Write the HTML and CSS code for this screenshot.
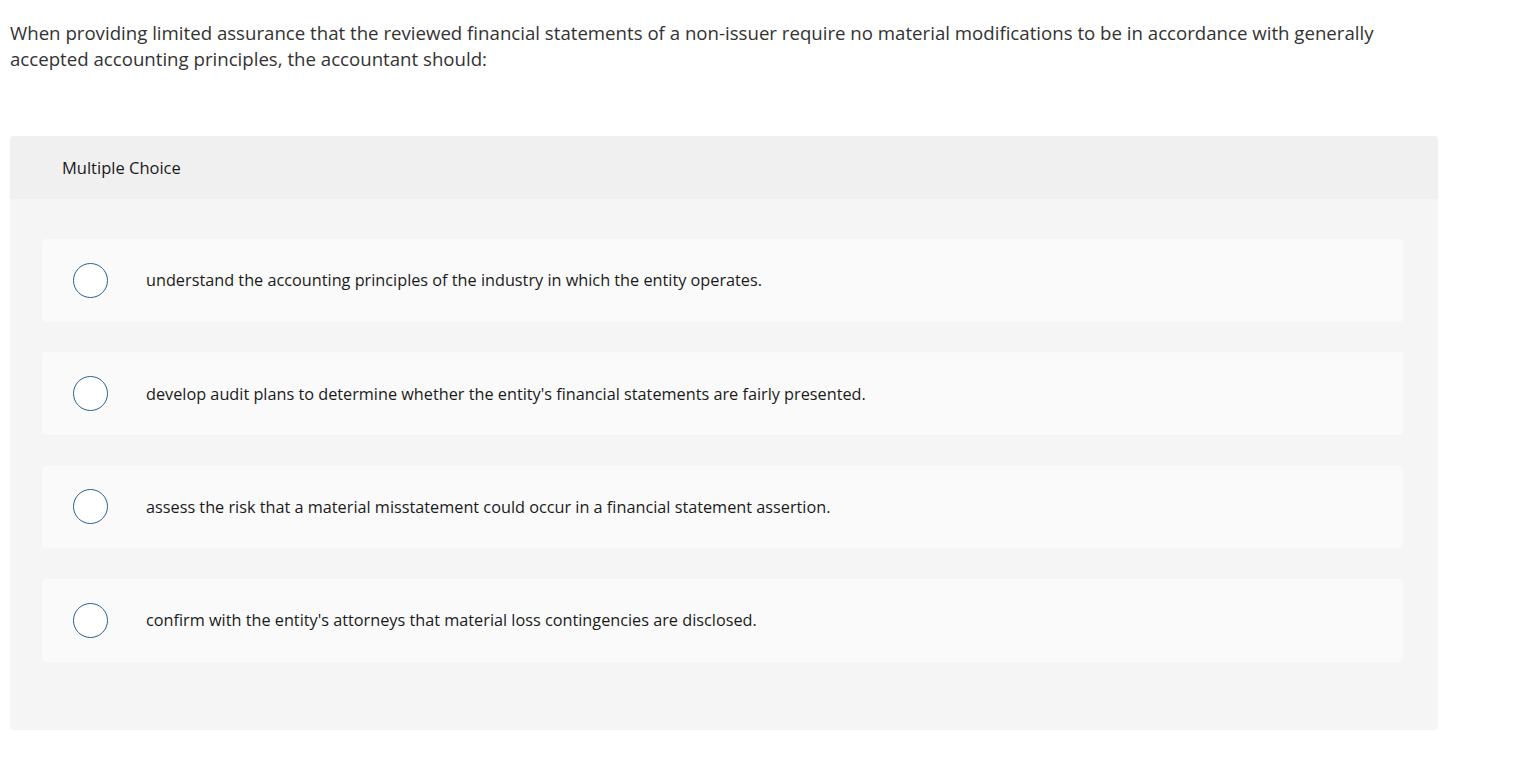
FILE: index.html
```html
<!DOCTYPE html>
<html>
<head>
<meta charset="utf-8">
<link rel="stylesheet" href="styles.css">
</head>
<body>
<div class="page">
  <p class="question">When providing limited assurance that the reviewed financial statements of a non-issuer require no material modifications to be in accordance with generally accepted accounting principles, the accountant should:</p>
  <div class="card">
    <div class="card-head">Multiple Choice</div>
    <div class="card-body">
      <div class="option"><span class="radio"></span><span class="opt-text">understand the accounting principles of the industry in which the entity operates.</span></div>
      <div class="option"><span class="radio"></span><span class="opt-text">develop audit plans to determine whether the entity's financial statements are fairly presented.</span></div>
      <div class="option"><span class="radio"></span><span class="opt-text">assess the risk that a material misstatement could occur in a financial statement assertion.</span></div>
      <div class="option"><span class="radio"></span><span class="opt-text">confirm with the entity's attorneys that material loss contingencies are disclosed.</span></div>
    </div>
  </div>
</div>
</body>
</html>
```

FILE: styles.css
```css
html, body {
  margin: 0;
  padding: 0;
  background: #ffffff;
}
body {
  font-family: "Open Sans", "Lato", sans-serif;
  color: #333333;
}
.page {
  padding: 20px 90px 0 10px;
}
.question {
  margin: 0;
  font-size: 18.65px;
  line-height: 26px;
  color: #333;
  max-width: 1410px;
}
.card {
  margin-top: 64px;
  width: 1428px;
  border-radius: 4px;
  background: #f5f5f5;
  overflow: hidden;
}
.card-head {
  height: 63px;
  background: #f0f0f0;
  display: flex;
  align-items: center;
  padding-left: 52px;
  font-size: 16.5px;
  color: #1a1a1a;
}
.card-body {
  padding: 40px 35px 68px 32px;
  display: flex;
  flex-direction: column;
  gap: 30.67px;
}
.option {
  height: 82.67px;
  background: #fafafa;
  border-radius: 4px;
  display: flex;
  align-items: center;
  padding-left: 31px;
}
.radio {
  box-sizing: border-box;
  width: 35px;
  height: 35px;
  border: 1.5px solid #2f5f8f;
  border-radius: 50%;
  background: #fff;
  flex: none;
}
.opt-text {
  margin-left: 38px;
  font-size: 16.25px;
  color: #1a1a1a;
}
```
